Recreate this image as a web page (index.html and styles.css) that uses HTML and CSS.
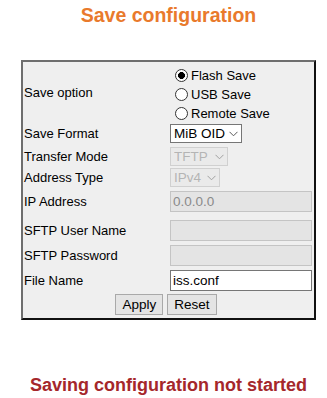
FILE: index.html
```html
<!DOCTYPE html>
<html>
<head>
<meta charset="utf-8">
<link rel="stylesheet" href="styles.css">
</head>
<body>
<div class="page">
<h1 class="title">Save configuration</h1>
<div class="panel">
  <div class="row radio-row">
    <div class="label label-opt">Save option</div>
    <div class="radios">
      <label class="radio"><input type="radio" name="opt" checked>Flash Save</label>
      <label class="radio"><input type="radio" name="opt">USB Save</label>
      <label class="radio"><input type="radio" name="opt">Remote Save</label>
    </div>
  </div>
  <div class="row r-format">
    <div class="label">Save Format</div>
    <span class="selwrap">
      <select class="sel sel-mib"><option>MiB OID</option></select>
      <svg class="chev" width="9" height="6" viewBox="0 0 9 6"><path d="M0.5 0.8 L4.5 4.8 L8.5 0.8" fill="none" stroke="#5a5a5a" stroke-width="1"/></svg>
    </span>
  </div>
  <div class="row r-transfer">
    <div class="label">Transfer Mode</div>
    <span class="selwrap">
      <select class="sel sel-tftp" disabled><option>TFTP</option></select>
      <svg class="chev" width="9" height="6" viewBox="0 0 9 6"><path d="M0.5 0.8 L4.5 4.8 L8.5 0.8" fill="none" stroke="#a0a0a0" stroke-width="1"/></svg>
    </span>
  </div>
  <div class="row r-addr">
    <div class="label">Address Type</div>
    <span class="selwrap">
      <select class="sel sel-ip" disabled><option>IPv4</option></select>
      <svg class="chev" width="9" height="6" viewBox="0 0 9 6"><path d="M0.5 0.8 L4.5 4.8 L8.5 0.8" fill="none" stroke="#a0a0a0" stroke-width="1"/></svg>
    </span>
  </div>
  <div class="row r-ip">
    <div class="label">IP Address</div>
    <input class="txt" type="text" value="0.0.0.0" disabled>
  </div>
  <div class="row r-user">
    <div class="label">SFTP User Name</div>
    <input class="txt" type="text" value="" disabled>
  </div>
  <div class="row r-pw">
    <div class="label">SFTP Password</div>
    <input class="txt" type="password" value="" disabled>
  </div>
  <div class="row r-file">
    <div class="label">File Name</div>
    <input class="txt" type="text" value="iss.conf">
  </div>
  <div class="buttons">
    <button class="btn">Apply</button>
    <button class="btn">Reset</button>
  </div>
</div>
<p class="status">Saving configuration not started</p>
</div>
</body>
</html>
```

FILE: styles.css
```css
html, body {
  margin: 0;
  padding: 0;
  background: #ffffff;
  font-family: "Liberation Sans", Arial, sans-serif;
  font-size: 13px;
  color: #000;
}
.page {
  width: 295px;
  margin-left: 21px;
}
.title {
  margin: 3px 0 0;
  text-align: center;
  font-size: 19.5px;
  line-height: 24px;
  font-weight: bold;
  color: #e97a2c;
}
.panel {
  margin-top: 33px;
  background: #efefef;
  border-top: 2px solid #6e6e6e;
  border-left: 2px solid #6e6e6e;
  border-right: 2px solid #111;
  border-bottom: 2px solid #111;
  padding: 4px 0 3px;
}
.row {
  display: flex;
  align-items: center;
}
.label {
  width: 146px;
  padding-left: 1px;
  flex: none;
}
.label-opt {
  padding-bottom: 4px;
}
.radios {
  display: flex;
  flex-direction: column;
}
.radio {
  display: flex;
  align-items: center;
  height: 19px;
}
.radio input {
  appearance: none;
  -webkit-appearance: none;
  box-sizing: border-box;
  margin: 0 3px 0 5px;
  width: 13px;
  height: 13px;
  border: 1px solid #333;
  border-radius: 50%;
  background: #fff;
}
.radio input:checked {
  background: radial-gradient(circle, #000 0 3.2px, #fff 3.7px);
}
.selwrap {
  position: relative;
  display: inline-flex;
}
.sel {
  appearance: none;
  -webkit-appearance: none;
  box-sizing: border-box;
  height: 19px;
  margin: 0;
  font-family: "Liberation Sans", Arial, sans-serif;
  font-size: 13.5px;
  padding: 0 0 0 3px;
  border: 1px solid #767676;
  background: #fff;
  color: #000;
  border-radius: 0;
}
.sel:disabled {
  border-color: #c4c4c4;
  background: #e9e9e9;
  color: #9c9c9c;
}
.chev {
  position: absolute;
  right: 4px;
  top: 7px;
}
.sel-mib { width: 72px; }
.sel-tftp { width: 58px; }
.sel-ip { width: 50px; }
.r-format { margin-top: 1px; }
.r-transfer { margin-top: 4px; }
.r-addr { margin-top: 2px; }
.r-ip { margin-top: 4px; }
.r-user { margin-top: 8px; }
.r-pw { margin-top: 4px; }
.r-file { margin-top: 4px; }
.txt {
  box-sizing: border-box;
  width: 142px;
  height: 21px;
  margin: 0;
  padding: 0 2px;
  font-family: "Liberation Sans", Arial, sans-serif;
  font-size: 13.5px;
  border: 1px solid #767676;
  background: #fff;
  color: #000;
}
.txt:disabled {
  border-color: #c4c4c4;
  background: #e4e4e4;
  color: #8a8a8a;
}
.buttons {
  margin-top: 3px;
  display: flex;
  justify-content: center;
  gap: 4px;
  padding-right: 5px;
}
.btn {
  height: 21px;
  padding: 0 6px;
  font-family: "Liberation Sans", Arial, sans-serif;
  font-size: 13.5px;
  border: 1px solid #a9a9a9;
  background: #e4e4e4;
  color: #000;
  border-radius: 0;
}
.status {
  margin: 54px 0 0;
  text-align: center;
  font-size: 18px;
  line-height: 22px;
  font-weight: bold;
  color: #a5272b;
}
```
